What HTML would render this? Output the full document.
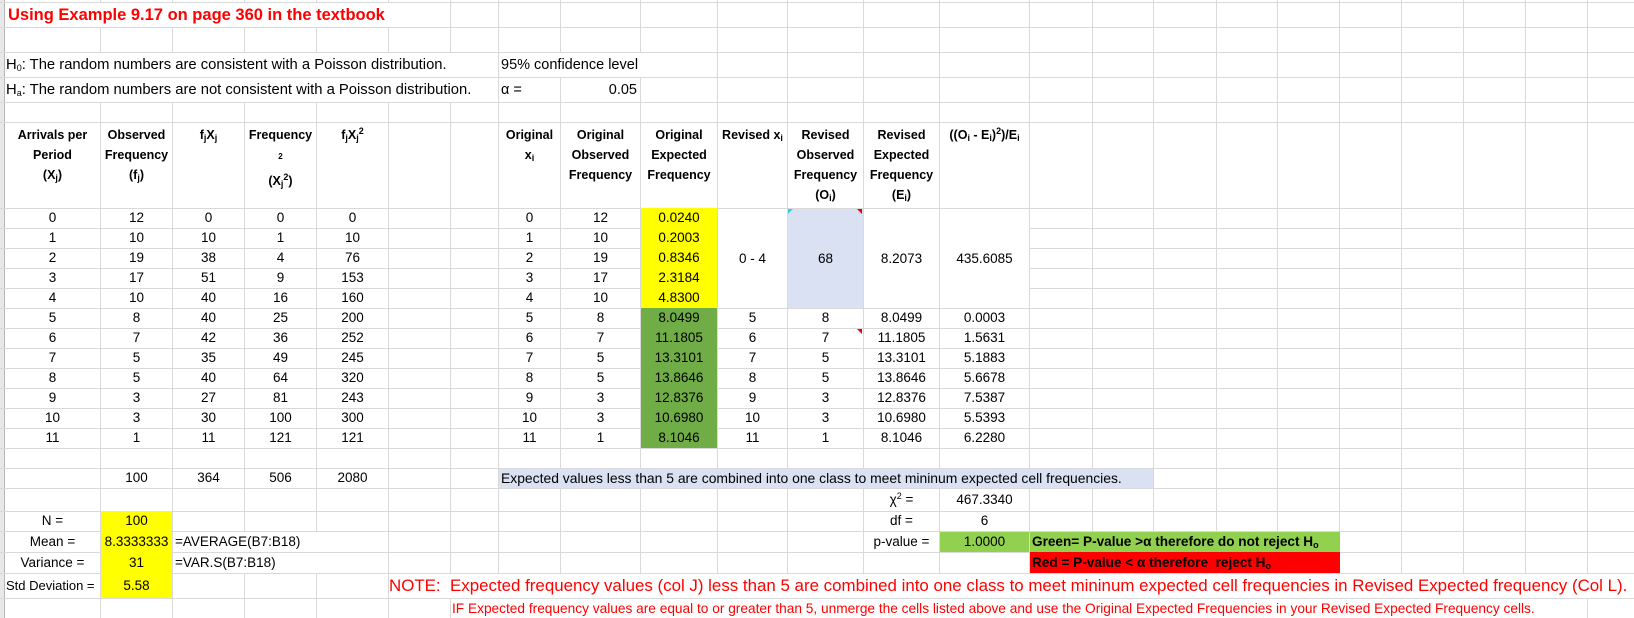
<!DOCTYPE html>
<html><head><meta charset="utf-8"><style>
body{margin:0;width:1634px;height:618px;overflow:hidden;background:#fff;position:relative;font-family:"Liberation Sans",sans-serif;font-size:13.5px;color:#000}
.v{position:absolute;top:0;width:1px;height:618px;background:#d9d9d9}
.h{position:absolute;left:0;height:1px;width:1634px;background:#d9d9d9}
.c{position:absolute;line-height:20px;height:20px;text-align:center;white-space:nowrap;overflow:visible}
.m{position:absolute;background:#fff;white-space:nowrap}
.hd{position:absolute;top:125px;text-align:center;font-weight:bold;line-height:20px;font-size:12.5px}
sub{font-size:9px;vertical-align:-2px;line-height:0}
sup{font-size:9px;vertical-align:5px;line-height:0}
.tri{position:absolute;width:0;height:0}
</style></head><body>
<div style="position:absolute;left:0;top:0;width:4px;height:618px;background:#e8e8e8;border-right:1px solid #b8b8b8"></div>
<div class="v" style="left:100px"></div><div class="v" style="left:172px"></div><div class="v" style="left:244px"></div><div class="v" style="left:316px"></div><div class="v" style="left:388px"></div><div class="v" style="left:450px"></div><div class="v" style="left:498px"></div><div class="v" style="left:560px"></div><div class="v" style="left:640px"></div><div class="v" style="left:717px"></div><div class="v" style="left:787px"></div><div class="v" style="left:863px"></div><div class="v" style="left:939px"></div><div class="v" style="left:1029px"></div><div class="v" style="left:1092px"></div><div class="v" style="left:1153px"></div><div class="v" style="left:1216px"></div><div class="v" style="left:1277px"></div><div class="v" style="left:1339px"></div><div class="v" style="left:1401px"></div><div class="v" style="left:1463px"></div><div class="v" style="left:1525px"></div><div class="v" style="left:1587px"></div>
<div class="h" style="top:2px"></div><div class="h" style="top:27px"></div><div class="h" style="top:52px"></div><div class="h" style="top:77px"></div><div class="h" style="top:102px"></div><div class="h" style="top:122px"></div><div class="h" style="top:208px"></div><div class="h" style="top:228px"></div><div class="h" style="top:248px"></div><div class="h" style="top:268px"></div><div class="h" style="top:288px"></div><div class="h" style="top:308px"></div><div class="h" style="top:328px"></div><div class="h" style="top:348px"></div><div class="h" style="top:368px"></div><div class="h" style="top:388px"></div><div class="h" style="top:408px"></div><div class="h" style="top:428px"></div><div class="h" style="top:448px"></div><div class="h" style="top:468px"></div><div class="h" style="top:488px"></div><div class="h" style="top:511px"></div><div class="h" style="top:531px"></div><div class="h" style="top:552px"></div><div class="h" style="top:573px"></div><div class="h" style="top:598px"></div>

<div class="m" style="left:5px;top:3px;width:383px;height:24px;color:#f00;font-weight:bold;font-size:16.5px;line-height:24px;padding-left:3px">Using Example 9.17 on page 360 in the textbook</div>
<div class="m" style="left:5px;top:53px;width:445px;height:24px;line-height:25px;font-size:14.8px;padding-left:1px">H<sub>0</sub>: The random numbers are consistent with a Poisson distribution.</div>
<div class="m" style="left:5px;top:78px;width:445px;height:24px;line-height:25px;font-size:14.8px;padding-left:1px">H<sub>a</sub>: The random numbers are not consistent with a Poisson distribution.</div>
<div class="m" style="left:499px;top:53px;width:140px;height:24px;line-height:25px;font-size:14.5px;padding-left:2px">95% confidence level</div>
<div class="c" style="left:501px;top:78px;line-height:25px;font-size:14.5px;text-align:left">α =</div>
<div class="c" style="left:561px;top:78px;width:76px;line-height:25px;font-size:14.5px;text-align:right">0.05</div>

<div class="hd" style="left:5px;width:95px">Arrivals per<br>Period<br>(X<sub>j</sub>)</div>
<div class="hd" style="left:101px;width:71px">Observed<br>Frequency<br>(f<sub>j</sub>)</div>
<div class="hd" style="left:173px;width:71px">f<sub>j</sub>X<sub>j</sub></div>
<div class="hd" style="left:245px;width:71px">Frequency<br><span style="font-size:8px">2</span><br><span style="position:relative;top:4px">(X<sub>j</sub><sup>2</sup>)</span></div>
<div class="hd" style="left:317px;width:71px">f<sub>j</sub>X<sub>j</sub><sup>2</sup></div>
<div class="hd" style="left:499px;width:61px">Original<br>x<sub>i</sub></div>
<div class="hd" style="left:561px;width:79px">Original<br>Observed<br>Frequency</div>
<div class="hd" style="left:641px;width:76px">Original<br>Expected<br>Frequency</div>
<div class="hd" style="left:718px;width:69px">Revised x<sub>i</sub></div>
<div class="hd" style="left:788px;width:75px">Revised<br>Observed<br>Frequency<br>(O<sub>i</sub>)</div>
<div class="hd" style="left:864px;width:75px">Revised<br>Expected<br>Frequency<br>(E<sub>i</sub>)</div>
<div class="hd" style="left:940px;width:89px">((O<sub>i</sub> - E<sub>i</sub>)<sup>2</sup>)/E<sub>i</sub></div>

<div style="position:absolute;left:641px;top:208px;width:76px;height:100px;background:#ffff00"></div>
<div style="position:absolute;left:641px;top:308px;width:76px;height:140px;background:#70ad47"></div>
<div class="m" style="left:718px;top:209px;width:69px;height:99px;line-height:99px;text-align:center">0 - 4</div>
<div class="m" style="left:788px;top:209px;width:75px;height:99px;line-height:99px;text-align:center;background:#d9e1f2">68</div>
<div class="m" style="left:864px;top:209px;width:75px;height:99px;line-height:99px;text-align:center">8.2073</div>
<div class="m" style="left:940px;top:209px;width:89px;height:99px;line-height:99px;text-align:center">435.6085</div>
<div class="tri" style="left:788px;top:209px;border-top:5px solid #2cd3e8;border-right:5px solid transparent"></div>
<div class="tri" style="left:857px;top:209px;border-top:5px solid #e00;border-left:5px solid transparent"></div>
<div class="tri" style="left:857px;top:329px;border-top:5px solid #e00;border-left:5px solid transparent"></div>

<div style="position:absolute;left:0;top:208px">
<div class="c" style="top:0;left:5px;width:95px">0</div><div class="c" style="top:0;left:101px;width:71px">12</div><div class="c" style="top:0;left:173px;width:71px">0</div><div class="c" style="top:0;left:245px;width:71px">0</div><div class="c" style="top:0;left:317px;width:71px">0</div><div class="c" style="top:0;left:499px;width:61px">0</div><div class="c" style="top:0;left:561px;width:79px">12</div><div class="c" style="top:0;left:641px;width:76px">0.0240</div>
<div class="c" style="top:20px;left:5px;width:95px">1</div><div class="c" style="top:20px;left:101px;width:71px">10</div><div class="c" style="top:20px;left:173px;width:71px">10</div><div class="c" style="top:20px;left:245px;width:71px">1</div><div class="c" style="top:20px;left:317px;width:71px">10</div><div class="c" style="top:20px;left:499px;width:61px">1</div><div class="c" style="top:20px;left:561px;width:79px">10</div><div class="c" style="top:20px;left:641px;width:76px">0.2003</div>
<div class="c" style="top:40px;left:5px;width:95px">2</div><div class="c" style="top:40px;left:101px;width:71px">19</div><div class="c" style="top:40px;left:173px;width:71px">38</div><div class="c" style="top:40px;left:245px;width:71px">4</div><div class="c" style="top:40px;left:317px;width:71px">76</div><div class="c" style="top:40px;left:499px;width:61px">2</div><div class="c" style="top:40px;left:561px;width:79px">19</div><div class="c" style="top:40px;left:641px;width:76px">0.8346</div>
<div class="c" style="top:60px;left:5px;width:95px">3</div><div class="c" style="top:60px;left:101px;width:71px">17</div><div class="c" style="top:60px;left:173px;width:71px">51</div><div class="c" style="top:60px;left:245px;width:71px">9</div><div class="c" style="top:60px;left:317px;width:71px">153</div><div class="c" style="top:60px;left:499px;width:61px">3</div><div class="c" style="top:60px;left:561px;width:79px">17</div><div class="c" style="top:60px;left:641px;width:76px">2.3184</div>
<div class="c" style="top:80px;left:5px;width:95px">4</div><div class="c" style="top:80px;left:101px;width:71px">10</div><div class="c" style="top:80px;left:173px;width:71px">40</div><div class="c" style="top:80px;left:245px;width:71px">16</div><div class="c" style="top:80px;left:317px;width:71px">160</div><div class="c" style="top:80px;left:499px;width:61px">4</div><div class="c" style="top:80px;left:561px;width:79px">10</div><div class="c" style="top:80px;left:641px;width:76px">4.8300</div>
<div class="c" style="top:100px;left:5px;width:95px">5</div><div class="c" style="top:100px;left:101px;width:71px">8</div><div class="c" style="top:100px;left:173px;width:71px">40</div><div class="c" style="top:100px;left:245px;width:71px">25</div><div class="c" style="top:100px;left:317px;width:71px">200</div><div class="c" style="top:100px;left:499px;width:61px">5</div><div class="c" style="top:100px;left:561px;width:79px">8</div><div class="c" style="top:100px;left:641px;width:76px">8.0499</div><div class="c" style="top:100px;left:718px;width:69px">5</div><div class="c" style="top:100px;left:788px;width:75px">8</div><div class="c" style="top:100px;left:864px;width:75px">8.0499</div><div class="c" style="top:100px;left:940px;width:89px">0.0003</div>
<div class="c" style="top:120px;left:5px;width:95px">6</div><div class="c" style="top:120px;left:101px;width:71px">7</div><div class="c" style="top:120px;left:173px;width:71px">42</div><div class="c" style="top:120px;left:245px;width:71px">36</div><div class="c" style="top:120px;left:317px;width:71px">252</div><div class="c" style="top:120px;left:499px;width:61px">6</div><div class="c" style="top:120px;left:561px;width:79px">7</div><div class="c" style="top:120px;left:641px;width:76px">11.1805</div><div class="c" style="top:120px;left:718px;width:69px">6</div><div class="c" style="top:120px;left:788px;width:75px">7</div><div class="c" style="top:120px;left:864px;width:75px">11.1805</div><div class="c" style="top:120px;left:940px;width:89px">1.5631</div>
<div class="c" style="top:140px;left:5px;width:95px">7</div><div class="c" style="top:140px;left:101px;width:71px">5</div><div class="c" style="top:140px;left:173px;width:71px">35</div><div class="c" style="top:140px;left:245px;width:71px">49</div><div class="c" style="top:140px;left:317px;width:71px">245</div><div class="c" style="top:140px;left:499px;width:61px">7</div><div class="c" style="top:140px;left:561px;width:79px">5</div><div class="c" style="top:140px;left:641px;width:76px">13.3101</div><div class="c" style="top:140px;left:718px;width:69px">7</div><div class="c" style="top:140px;left:788px;width:75px">5</div><div class="c" style="top:140px;left:864px;width:75px">13.3101</div><div class="c" style="top:140px;left:940px;width:89px">5.1883</div>
<div class="c" style="top:160px;left:5px;width:95px">8</div><div class="c" style="top:160px;left:101px;width:71px">5</div><div class="c" style="top:160px;left:173px;width:71px">40</div><div class="c" style="top:160px;left:245px;width:71px">64</div><div class="c" style="top:160px;left:317px;width:71px">320</div><div class="c" style="top:160px;left:499px;width:61px">8</div><div class="c" style="top:160px;left:561px;width:79px">5</div><div class="c" style="top:160px;left:641px;width:76px">13.8646</div><div class="c" style="top:160px;left:718px;width:69px">8</div><div class="c" style="top:160px;left:788px;width:75px">5</div><div class="c" style="top:160px;left:864px;width:75px">13.8646</div><div class="c" style="top:160px;left:940px;width:89px">5.6678</div>
<div class="c" style="top:180px;left:5px;width:95px">9</div><div class="c" style="top:180px;left:101px;width:71px">3</div><div class="c" style="top:180px;left:173px;width:71px">27</div><div class="c" style="top:180px;left:245px;width:71px">81</div><div class="c" style="top:180px;left:317px;width:71px">243</div><div class="c" style="top:180px;left:499px;width:61px">9</div><div class="c" style="top:180px;left:561px;width:79px">3</div><div class="c" style="top:180px;left:641px;width:76px">12.8376</div><div class="c" style="top:180px;left:718px;width:69px">9</div><div class="c" style="top:180px;left:788px;width:75px">3</div><div class="c" style="top:180px;left:864px;width:75px">12.8376</div><div class="c" style="top:180px;left:940px;width:89px">7.5387</div>
<div class="c" style="top:200px;left:5px;width:95px">10</div><div class="c" style="top:200px;left:101px;width:71px">3</div><div class="c" style="top:200px;left:173px;width:71px">30</div><div class="c" style="top:200px;left:245px;width:71px">100</div><div class="c" style="top:200px;left:317px;width:71px">300</div><div class="c" style="top:200px;left:499px;width:61px">10</div><div class="c" style="top:200px;left:561px;width:79px">3</div><div class="c" style="top:200px;left:641px;width:76px">10.6980</div><div class="c" style="top:200px;left:718px;width:69px">10</div><div class="c" style="top:200px;left:788px;width:75px">3</div><div class="c" style="top:200px;left:864px;width:75px">10.6980</div><div class="c" style="top:200px;left:940px;width:89px">5.5393</div>
<div class="c" style="top:220px;left:5px;width:95px">11</div><div class="c" style="top:220px;left:101px;width:71px">1</div><div class="c" style="top:220px;left:173px;width:71px">11</div><div class="c" style="top:220px;left:245px;width:71px">121</div><div class="c" style="top:220px;left:317px;width:71px">121</div><div class="c" style="top:220px;left:499px;width:61px">11</div><div class="c" style="top:220px;left:561px;width:79px">1</div><div class="c" style="top:220px;left:641px;width:76px">8.1046</div><div class="c" style="top:220px;left:718px;width:69px">11</div><div class="c" style="top:220px;left:788px;width:75px">1</div><div class="c" style="top:220px;left:864px;width:75px">8.1046</div><div class="c" style="top:220px;left:940px;width:89px">6.2280</div>
</div>

<div class="c" style="top:468px;left:101px;width:71px">100</div><div class="c" style="top:468px;left:173px;width:71px">364</div><div class="c" style="top:468px;left:245px;width:71px">506</div><div class="c" style="top:468px;left:317px;width:71px">2080</div>
<div class="m" style="left:499px;top:469px;width:654px;height:19px;line-height:19px;background:#d9e1f2;font-size:13.9px;padding-left:2px;box-sizing:border-box">Expected values less than 5 are combined into one class to meet mininum expected cell frequencies.</div>

<div class="c" style="top:489px;left:864px;width:75px;height:22px;line-height:22px">χ<sup>2</sup> =</div><div class="c" style="top:489px;left:940px;width:89px;height:22px;line-height:22px">467.3340</div>
<div class="c" style="top:511px;left:864px;width:75px">df =</div><div class="c" style="top:511px;left:940px;width:89px">6</div>
<div class="c" style="top:531px;left:864px;width:75px;line-height:21px">p-value =</div>
<div class="m" style="left:940px;top:532px;width:89px;height:20px;line-height:20px;text-align:center;background:#92d050">1.0000</div>
<div class="m" style="left:1030px;top:532px;width:310px;height:20px;line-height:20px;background:#92d050;font-weight:bold;font-size:13.6px;padding-left:2px;box-sizing:border-box;overflow:hidden">Green= P-value &gt;α therefore do not reject H<sub>o</sub></div>
<div class="m" style="left:1030px;top:552px;width:310px;height:21px;line-height:21px;background:#ff0000;font-weight:bold;font-size:13.6px;padding-left:2px;box-sizing:border-box">Red = P-value &lt; α therefore&nbsp; reject H<sub>o</sub></div>

<div style="position:absolute;left:101px;top:511px;width:71px;height:87px;background:#ffff00"></div>
<div class="c" style="top:511px;left:5px;width:95px">N =</div><div class="c" style="top:511px;left:101px;width:71px">100</div>
<div class="c" style="top:531px;left:5px;width:95px;line-height:21px">Mean =</div><div class="c" style="top:531px;left:101px;width:71px;line-height:21px">8.3333333</div>
<div class="m" style="left:173px;top:532px;width:142px;height:20px;line-height:20px;padding-left:2px">=AVERAGE(B7:B18)</div>
<div class="c" style="top:552px;left:5px;width:95px;line-height:21px">Variance =</div><div class="c" style="top:552px;left:101px;width:71px;line-height:21px">31</div>
<div class="m" style="left:173px;top:553px;width:142px;height:20px;line-height:20px;padding-left:2px">=VAR.S(B7:B18)</div>
<div class="c" style="top:574px;left:5px;width:95px;line-height:24px;text-align:left;padding-left:1px;font-size:13px">Std Deviation =</div><div class="c" style="top:574px;left:101px;width:71px;line-height:24px">5.58</div>

<div class="m" style="left:389px;top:574px;width:1245px;height:24px;line-height:24px;color:#f00;font-size:16.9px;padding-left:0;box-sizing:border-box">NOTE:&nbsp; Expected frequency values (col J) less than 5 are combined into one class to meet mininum expected cell frequencies in Revised Expected frequency (Col L).</div>
<div class="m" style="left:451px;top:599px;width:1136px;height:19px;line-height:19px;color:#f00;font-size:13.7px;padding-left:1px;box-sizing:border-box;overflow:hidden">IF Expected frequency values are equal to or greater than 5, unmerge the cells listed above and use the Original Expected Frequencies in your Revised Expected Frequency cells.</div>
</body></html>
